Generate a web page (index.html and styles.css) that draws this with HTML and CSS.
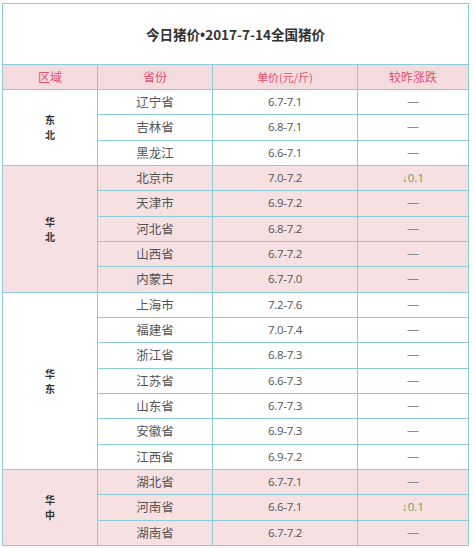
FILE: index.html
```html
<!DOCTYPE html>
<html lang="zh">
<head>
<meta charset="utf-8">
<link rel="stylesheet" href="styles.css">
</head>
<body>
<table class="price">
  <colgroup>
    <col class="c-region"><col class="c-prov"><col class="c-price"><col class="c-chg">
  </colgroup>
  <tr class="title-row"><td colspan="4" class="title">今日猪价<span class="dot">•</span>2017-7-14全国猪价</td></tr>
  <tr class="head"><th>区域</th><th>省份</th><th class="small">单价(元/斤)</th><th>较昨涨跌</th></tr>

  <tr><td rowspan="3" class="region">东<br>北</td><td>辽宁省</td><td class="num">6.7-7.1</td><td class="chg">—</td></tr>
  <tr><td>吉林省</td><td class="num">6.8-7.1</td><td class="chg">—</td></tr>
  <tr><td>黑龙江</td><td class="num">6.6-7.1</td><td class="chg">—</td></tr>

  <tr class="pink"><td rowspan="5" class="region">华<br>北</td><td>北京市</td><td class="num">7.0-7.2</td><td class="chg down">↓0.1</td></tr>
  <tr class="pink"><td>天津市</td><td class="num">6.9-7.2</td><td class="chg">—</td></tr>
  <tr class="pink"><td>河北省</td><td class="num">6.8-7.2</td><td class="chg">—</td></tr>
  <tr class="pink"><td>山西省</td><td class="num">6.7-7.2</td><td class="chg">—</td></tr>
  <tr class="pink"><td>内蒙古</td><td class="num">6.7-7.0</td><td class="chg">—</td></tr>

  <tr><td rowspan="7" class="region">华<br>东</td><td>上海市</td><td class="num">7.2-7.6</td><td class="chg">—</td></tr>
  <tr><td>福建省</td><td class="num">7.0-7.4</td><td class="chg">—</td></tr>
  <tr><td>浙江省</td><td class="num">6.8-7.3</td><td class="chg">—</td></tr>
  <tr><td>江苏省</td><td class="num">6.6-7.3</td><td class="chg">—</td></tr>
  <tr><td>山东省</td><td class="num">6.7-7.3</td><td class="chg">—</td></tr>
  <tr><td>安徽省</td><td class="num">6.9-7.3</td><td class="chg">—</td></tr>
  <tr><td>江西省</td><td class="num">6.9-7.2</td><td class="chg">—</td></tr>

  <tr class="pink"><td rowspan="3" class="region">华<br>中</td><td>湖北省</td><td class="num">6.7-7.1</td><td class="chg">—</td></tr>
  <tr class="pink"><td>河南省</td><td class="num">6.6-7.1</td><td class="chg down">↓0.1</td></tr>
  <tr class="pink"><td>湖南省</td><td class="num">6.7-7.2</td><td class="chg">—</td></tr>
</table>
</body>
</html>
```
FILE: styles.css
```css
html, body {
  margin: 0;
  padding: 0;
  background: #ffffff;
}
body {
  padding: 3px 0 0 2px;
  font-family: "Noto Sans CJK SC", "Noto Sans", sans-serif;
  color: #555555;
}
.price {
  border-collapse: collapse;
  width: 466px;
  table-layout: fixed;
}
.c-region { width: 95px; }
.c-prov { width: 115px; }
.c-price { width: 145px; }
.c-chg { width: 111px; }

.price td, .price th {
  border: 1px solid #8ccbd8;
  text-align: center;
  vertical-align: middle;
  padding: 0;
  height: 24.33px;
  font-size: 12.5px;
  line-height: 14px;
  font-weight: normal;
}
.price .title {
  height: 60px;
  font-size: 13.5px;
  font-weight: bold;
  color: #333333;
}
.price .title .dot {
  font-family: "Open Sans", sans-serif;
}
.head th {
  background: #f4dcde;
  color: #e2506f;
  font-size: 12px;
  height: 24px;
}
.head th.small { font-size: 11px; }
.pink td { background: #f6e0e1; }
.price td.region {
  font-size: 10px;
  font-weight: bold;
  color: #333333;
  line-height: 15px;
}
.price td.num {
  font-family: "Open Sans", "Noto Sans", sans-serif;
  font-size: 11.5px;
  letter-spacing: -0.3px;
  color: #555555;
}
.price td.chg {
  color: #8a8a8a;
  font-family: "Open Sans", sans-serif;
  font-size: 12px;
}
.price td.down {
  color: #6f9a5f;
  font-size: 11.5px;
}
```
